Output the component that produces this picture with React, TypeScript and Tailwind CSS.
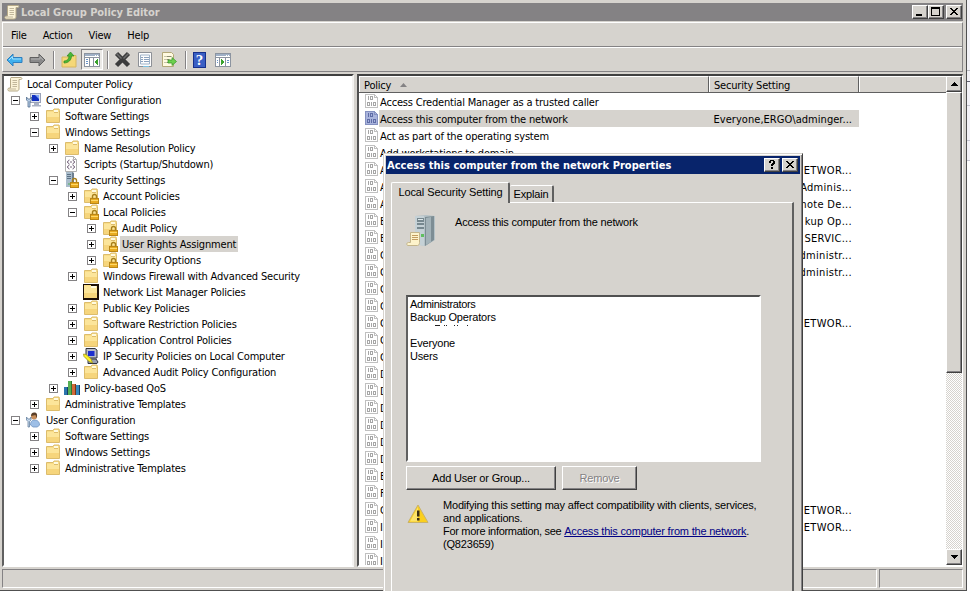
import type { ReactNode } from "react";

// ============================================================
//  Local Group Policy Editor: console window + properties dialog
// ============================================================

type IconName =
  | "scroll"
  | "computer"
  | "folder"
  | "script"
  | "server"
  | "locked"
  | "framed"
  | "ipsec"
  | "bars"
  | "user";

interface TreeItem {
  level: number;
  label: string;
  icon: IconName;
  box?: "+" | "-";
  selected?: boolean;
}

const TREE: TreeItem[] = [
  { level: 0, label: "Local Computer Policy", icon: "scroll" },
  { level: 1, label: "Computer Configuration", icon: "computer", box: "-" },
  { level: 2, label: "Software Settings", icon: "folder", box: "+" },
  { level: 2, label: "Windows Settings", icon: "folder", box: "-" },
  { level: 3, label: "Name Resolution Policy", icon: "folder", box: "+" },
  { level: 3, label: "Scripts (Startup/Shutdown)", icon: "script" },
  { level: 3, label: "Security Settings", icon: "server", box: "-" },
  { level: 4, label: "Account Policies", icon: "locked", box: "+" },
  { level: 4, label: "Local Policies", icon: "locked", box: "-" },
  { level: 5, label: "Audit Policy", icon: "locked", box: "+" },
  { level: 5, label: "User Rights Assignment", icon: "locked", box: "+", selected: true },
  { level: 5, label: "Security Options", icon: "locked", box: "+" },
  { level: 4, label: "Windows Firewall with Advanced Security", icon: "folder", box: "+" },
  { level: 4, label: "Network List Manager Policies", icon: "framed" },
  { level: 4, label: "Public Key Policies", icon: "folder", box: "+" },
  { level: 4, label: "Software Restriction Policies", icon: "folder", box: "+" },
  { level: 4, label: "Application Control Policies", icon: "folder", box: "+" },
  { level: 4, label: "IP Security Policies on Local Computer", icon: "ipsec", box: "+" },
  { level: 4, label: "Advanced Audit Policy Configuration", icon: "folder", box: "+" },
  { level: 3, label: "Policy-based QoS", icon: "bars", box: "+" },
  { level: 2, label: "Administrative Templates", icon: "folder", box: "+" },
  { level: 1, label: "User Configuration", icon: "user", box: "-" },
  { level: 2, label: "Software Settings", icon: "folder", box: "+" },
  { level: 2, label: "Windows Settings", icon: "folder", box: "+" },
  { level: 2, label: "Administrative Templates", icon: "folder", box: "+" },
];

const INDENT = ["pl-[3px]", "pl-[7px]", "pl-[26px]", "pl-[45px]", "pl-[64px]", "pl-[83px]"];

const POLICIES: [string, string][] = [
  ["Access Credential Manager as a trusted caller", ""],
  ["Access this computer from the network", "Everyone,ERGO\\adminger..."],
  ["Act as part of the operating system", ""],
  ["Add workstations to domain", ""],
  ["A", "ETWOR..."],
  ["A", "Adminis..."],
  ["A", "mote De..."],
  ["B", "kup Op..."],
  ["B", "SERVIC..."],
  ["C", "dministr..."],
  ["C", "dministr..."],
  ["C", ""],
  ["C", ""],
  ["C", "ETWOR..."],
  ["C", ""],
  ["C", ""],
  ["D", ""],
  ["D", ""],
  ["D", ""],
  ["D", ""],
  ["D", ""],
  ["D", ""],
  ["E", ""],
  ["F", ""],
  ["G", "ETWOR..."],
  ["I", "ETWOR..."],
  ["I", ""],
  ["I", ""],
];

const RAISED =
  "border border-t-white border-l-white border-r-[#404040] border-b-[#404040] shadow-[inset_-1px_-1px_0_#848284] bg-[#d6d3ce]";

function FolderShape() {
  return (
    <>
      <path d="M1.500 2.500h6.500l1-1.500h5l.5 1.500v12h-13z" fill="#f9dd86" stroke="#dcbc6c" />
      <path d="M2 4h12v10H2z" fill="#fce59a" />
      <path d="M2 9h12v5H2z" fill="#f6d57c" />
      <path d="M9 2h4v2H9z" fill="#fffae0" />
      <path d="M9 4.500h4" stroke="#dcbc6c" />
    </>
  );
}

function LockShape() {
  return (
    <>
      <path d="M9.500 11V8.500a2 2 0 0 1 4 0V11" fill="none" stroke="#a8801c" strokeWidth="1.400" />
      <rect x="7.500" y="10.500" width="8" height="5" fill="#e8ab20" stroke="#b98618" />
      <path d="M8 12.500h7" stroke="#ffd968" />
    </>
  );
}

function ScrollShape() {
  return (
    <>
      <path d="M4 1.500h10c1 0 1.500 2-.5 2H12v9.500c0 1-1 2-2 2H2c-1.500 0-1.500-3 0-3h1.500V2.500z" fill="#fbf3d8" stroke="#b5a988" />
      <path d="M5.500 4.500h4.500M5.500 6.500h4.500M5.500 8.500h4.500M5.500 10.500h4.500M2 13h7" stroke="#c1b79c" />
    </>
  );
}

function TreeIcon({ name }: { name: IconName }) {
  return (
    <svg className="block size-4 shrink-0" viewBox="0 0 16 16">
      {name === "scroll" && <ScrollShape />}
      {name === "folder" && <FolderShape />}
      {name === "locked" && (
        <>
          <FolderShape />
          <LockShape />
        </>
      )}
      {name === "framed" && (
        <>
          <path d="M0 0h16v16H0z" fill="#1c0f08" />
          <path d="M1 2h13v12H1z" fill="#fce59a" />
          <path d="M1 9h13v5H1z" fill="#f6d57c" />
          <path d="M1 1h7v1H1z" fill="#f9dd86" />
          <path d="M8 2h5v2H8z" fill="#fffae0" />
        </>
      )}
      {name === "computer" && (
        <>
          <rect x="4.500" y="1.500" width="10" height="9" fill="#dce2ee" stroke="#9aa2b8" />
          <path d="M6 3h7v6H6z" fill="#1230c0" />
          <path d="M9 3h4v4z" fill="#7fa4f4" />
          <path d="M8 11h5v2h2v1.500H6V13h2z" fill="#aab2c4" />
          <path d="M.5 5v3L2 9.500V15h2V9.500L5.500 8V5L4 7H2z" fill="#b9cfe8" stroke="#54708f" strokeWidth=".8" />
        </>
      )}
      {name === "script" && (
        <>
          <path d="M1.500.5h8l3 3v12h-11z" fill="#fff" stroke="#b0b0b0" />
          <path d="M9.500.5v3h3" fill="none" stroke="#b0b0b0" />
          <path d="M5.500 4C3.500 4 5 6 3 6c2 0 .5 2 2.500 2M8.500 4c2 0 .5 2 2.500 2-2 0-.5 2-2.500 2M5.500 9C3.500 9 5 11 3 11c2 0 .5 2 2.500 2M8.500 9c2 0 .5 2 2.500 2-2 0-.5 2-2.500 2M6 6h2M6 11h2" fill="none" stroke="#75647c" />
        </>
      )}
      {name === "server" && (
        <>
          <path d="M2 0h6l2 1v13l-2 1H2z" fill="#a9bccb" />
          <path d="M8 0l2 1v13l-2 1z" fill="#6d7f90" />
          <path d="M3 2.500h4M3 4.500h4M3 6.500h4" stroke="#5c7184" />
          <path d="M4 12h3" stroke="#4fae5a" />
          <g transform="translate(-1 0)">
            <LockShape />
          </g>
        </>
      )}
      {name === "ipsec" && (
        <>
          <path d="M3 .5h9l2 1.500v8H3z" fill="#b9bdc9" stroke="#31343f" />
          <path d="M5 3h6.500v5H5z" fill="#1c2fd0" />
          <path d="M5 11h8l2 3-1 1.500H5z" fill="#9aa0b0" stroke="#31343f" />
          <path d="M.5 6L3 6.500l5 4.500 1.500 4-3.500-1.500-5-5z" fill="#fbf22a" stroke="#a5971b" strokeWidth=".8" />
        </>
      )}
      {name === "bars" && (
        <>
          <path d="M0 7h4v8H0z" fill="#2b74ad" />
          <path d="M4 1h4v14H4z" fill="#55b054" />
          <path d="M7 1h1v14H7z" fill="#2c7a30" />
          <path d="M8 4h4v11H8z" fill="#cf6a3a" />
          <path d="M11 4h1v11h-1z" fill="#7d3414" />
          <path d="M12 5h4v10h-4z" fill="#3588bd" />
          <path d="M15 5h1v10h-1zM3 7h1v8H3z" fill="#153f66" />
        </>
      )}
      {name === "user" && (
        <>
          <path d="M4.500 13c0-4 2-5 4-5s5 1 5 5l-2 2H7z" fill="#9ebfe6" stroke="#6e93bf" strokeWidth=".8" />
          <circle cx="8" cy="4.500" r="3" fill="#c98f5c" />
          <path d="M5 4c0-3 2-4 4-3.500C11.500 1 11.500 4 10.500 6L9.500 3z" fill="#5a3f28" />
          <path d="M.5 5v3L2 9.500V15h1.500V9.500L5 8V5L4 7H2z" fill="#c7dbef" stroke="#67819f" strokeWidth=".8" />
        </>
      )}
    </svg>
  );
}

function Expander({ sign }: { sign?: "+" | "-" }) {
  if (!sign) return <span className="w-[9px] shrink-0" />;
  return (
    <svg className="block size-[9px] shrink-0" viewBox="0 0 9 9" shapeRendering="crispEdges">
      <rect x=".5" y=".5" width="8" height="8" fill="#fff" stroke="#848284" />
      <path d={sign === "+" ? "M2 4.500h5M4.500 2v5" : "M2 4.500h5"} stroke="#000" />
    </svg>
  );
}

function PolicyIcon({ active }: { active: boolean }) {
  return (
    <svg className="block h-[15px] w-[14px] shrink-0" viewBox="0 0 14 15" shapeRendering="crispEdges">
      <path d="M.5.5h9l3 3v10h-12z" fill={active ? "#a9b4dc" : "#fff"} stroke={active ? "#8490c0" : "#c0c0c0"} />
      <path d="M9.500.5v3h3" fill="none" stroke={active ? "#8490c0" : "#c0c0c0"} />
      <g fill="none" stroke={active ? "#5f6ca6" : "#a6a6a6"}>
        <path d="M3.500 2v4M5.500 2.500h2v3h-2zM2.500 8.500h2v3h-2zM6.500 8v4M8.500 8.500h2v3h-2z" />
      </g>
    </svg>
  );
}

function Toolbar() {
  return (
    <div className="flex h-6 items-center border-t border-white pl-[3px]">
      <svg className="block h-4 w-[17px]" viewBox="0 0 17 16">
        <path d="M1 8l6-6v3.500h9v5H7V14z" fill="#3fb0ee" stroke="#2f7fbe" />
        <path d="M3 8l3.500-3.500V7H15" fill="none" stroke="#a4e0fb" />
      </svg>
      <svg className="ml-[6px] block h-4 w-[17px]" viewBox="0 0 17 16">
        <path d="M16 8l-6-6v3.500H1v5h9V14z" fill="#8a8a8a" stroke="#606060" />
        <path d="M2 7h9V4.500L14 8" fill="none" stroke="#b0b0b0" />
      </svg>
      <Divider className="ml-[7px]" />
      <svg className="ml-[6px] block size-4" viewBox="0 0 16 16">
        <path d="M1 5h6l1-1.500h7V15H1z" fill="#f5d878" stroke="#d6b660" />
        <path d="M3 9c3 0 5-2 5-5H6l3.500-4L13 4h-2.500c0 4-3 7-7.500 7z" fill="#49b834" stroke="#2f8a24" strokeWidth=".7" />
      </svg>
      <div className="ml-[4px] flex h-[21px] w-[22px] items-center justify-center border border-t-[#848284] border-l-[#848284] border-r-white border-b-white bg-[#ebe9e6]">
        <ConsoleIcon flip={false} />
      </div>
      <Divider className="ml-[4px]" />
      <svg className="ml-[5px] block size-[17px]" viewBox="0 0 17 17">
        <path d="M2.500 2.500l12 12M14.500 2.500l-12 12" stroke="#3c3c3c" strokeWidth="4.400" />
        <path d="M2.500 2.500l5 5M14.500 2.500l-5 5" stroke="#6d6d6d" strokeWidth="1.500" />
      </svg>
      <svg className="ml-[6px] block size-4" viewBox="0 0 16 16">
        <path d="M1.500.5h13v14h-13z" fill="#fdfdfd" stroke="#8d9096" />
        <path d="M4 5.500h2M4 7.500h2M4 9.500h2M7 5.500h5M7 7.500h5M7 9.500h5" stroke="#8ca2be" />
        <path d="M3.500 3h9v9h-9z" fill="none" stroke="#9eb2c8" />
        <path d="M6 14.500h6" stroke="#7cc2e2" />
      </svg>
      <svg className="ml-[8px] block size-4" viewBox="0 0 16 16">
        <path d="M1.500.5h9l2 2v12h-11z" fill="#fffae0" stroke="#b3a878" />
        <path d="M3.500 4.500h1M3.500 7.500h1M3.500 10.500h1M5.500 4.500h5M5.500 7.500h3M5.500 10.500h2" stroke="#8c8c70" />
        <path d="M7 8h4V5.500L15.500 9.500 11 13.500V11H7z" fill="#6cd04e" stroke="#349426" strokeWidth=".7" />
      </svg>
      <Divider className="ml-[8px]" />
      <div className="ml-[6px] flex h-4 w-[13px] items-center justify-center border border-[#16308c] bg-[#3a5fc4] font-['Liberation_Serif',serif] text-[15px] font-bold text-white">
        ?
      </div>
      <div className="ml-[9px]">
        <ConsoleIcon flip />
      </div>
    </div>
  );
}

function ConsoleIcon({ flip }: { flip: boolean }) {
  return (
    <svg className="block h-[14px] w-4" viewBox="0 0 16 14" shapeRendering="crispEdges">
      <path d="M.5.5h15v13H.5z" fill="#fff" stroke="#8c94a0" />
      <path d="M1 1h14v2H1z" fill="#9fb0c6" />
      <path d="M11 2h1M13 2h1" stroke="#fff" />
      <path d="M1 4.500h14" stroke="#8c94a0" />
      <path d={flip ? "M10.500 5v8M4.500 5v8" : "M5.500 5v8M9.500 5v8"} stroke="#8c94a0" />
      <path d={flip ? "M12 7.500h2M12 9.500h2M2 7.500h1M2 9.500h1" : "M2 6.500h2M2 8.500h2M2 10.500h2"} stroke="#6a93c8" />
      <path d={flip ? "M6 6l4 3-4 3z" : "M14 6l-4 3 4 3z"} fill="#39a22c" />
    </svg>
  );
}

function Divider({ className }: { className: string }) {
  return <span className={`h-[18px] w-[2px] border-l border-[#848284] bg-white ${className}`} />;
}

function CaptionButton({ children, className = "" }: { children: ReactNode; className?: string }) {
  return (
    <button className={`flex h-[14px] w-4 items-center justify-center text-black ${RAISED} ${className}`}>
      <svg className="block h-[10px] w-3" viewBox="0 0 12 10" shapeRendering="crispEdges">
        {children}
      </svg>
    </button>
  );
}

function CloseGlyph() {
  return (
    <path
      d="M2 1h2v1h1v1h2V2h1V1h2v1H9v1H8v1H7v1h1v1h1v1h1v1H8V7H7V6H5v1H4v1H2V7h1V6h1V5h1V4H4V3H3V2H2z"
      fill="#000"
    />
  );
}

function PolicyTree() {
  return (
    <div className="w-[352px] shrink-0 overflow-hidden border-2 border-t-[#404040] border-l-[#606060] border-r-[#f4f3f1] border-b-white bg-white">
      {TREE.map((item, i) => (
        <div key={i} className={`flex h-4 items-center whitespace-nowrap ${INDENT[item.level]}`}>
          {item.level > 0 && <Expander sign={item.box} />}
          <span className={item.level > 0 ? "ml-[6px]" : ""}>
            <TreeIcon name={item.icon} />
          </span>
          <span
            className={`ml-[2px] h-4 px-[2px] leading-[17px] ${item.selected ? "bg-[#d6d3ce]" : ""}`}
          >
            {item.label}
          </span>
        </div>
      ))}
    </div>
  );
}

function PolicyList() {
  return (
    <div className="flex min-w-0 flex-1 border-2 border-t-[#404040] border-l-[#505050] border-r border-r-white border-b-white bg-white">
      <div className="flex min-w-0 flex-1 flex-col overflow-hidden">
        <div className="flex h-[17px] shrink-0 border-b border-[#606060] bg-[#d6d3ce]">
          <div className="flex w-[350px] items-center border-t border-l border-white border-r border-r-[#606060] pl-1 pt-[2px]">
            Policy
            <svg className="-mt-px ml-[9px] block h-1 w-[7px]" viewBox="0 0 7 4">
              <path d="M3.500 0L7 4H0z" fill="#848284" />
            </svg>
          </div>
          <div className="flex w-[150px] items-center border-t border-l border-white border-r border-r-[#606060] pl-1 pt-[2px]">
            Security Setting
          </div>
          <div className="flex-1 border-t border-l border-white" />
        </div>
        <div className="min-h-0 flex-1 overflow-hidden">
          {POLICIES.map(([name, setting], i) => (
            <div key={i} className="flex h-[17px] items-center whitespace-nowrap pl-[6px]">
              <PolicyIcon active={i === 1} />
              <div
                className={`flex h-[17px] w-[480px] items-center justify-between pl-[1px] pr-[7px] leading-[15px] ${
                  i === 1 ? "bg-[#d6d3ce]" : ""
                }`}
              >
                <span className="pt-px">{name}</span>
                <span className={`pt-px ${i === 1 ? "tracking-[0.04px]" : "tracking-[0.3px]"}`}>
                  {setting}
                </span>
              </div>
            </div>
          ))}
        </div>
      </div>
      <div className="flex w-4 shrink-0 flex-col bg-[repeating-conic-gradient(#fff_0_25%,#d6d3ce_0_50%)] bg-[length:2px_2px]">
        <div className={`flex h-4 items-center justify-center ${RAISED}`}>
          <svg className="block h-1 w-[7px]" viewBox="0 0 7 4" shapeRendering="crispEdges">
            <path d="M3 0h1v1h1v1h1v1h1v1H0V3h1V2h1V1h1z" />
          </svg>
        </div>
        <div className={`h-[281px] ${RAISED}`} />
        <div className={`mt-auto flex h-4 items-center justify-center ${RAISED}`}>
          <svg className="block h-1 w-[7px]" viewBox="0 0 7 4" shapeRendering="crispEdges">
            <path d="M0 0h7v1H6v1H5v1H4v1H3V3H2V2H1V1H0z" />
          </svg>
        </div>
      </div>
    </div>
  );
}

function PropertiesDialog() {
  return (
    <div className="absolute left-[383px] top-[153px] flex h-[438px] w-[420px] flex-col border-x border-t border-l-[#d6d3ce] border-t-[#d6d3ce] border-r-[#404040] bg-[#d6d3ce] shadow-[inset_1px_1px_0_#fff,inset_-1px_0_0_#848284]">
      <div className="mx-[2px] mt-[2px] flex h-[18px] shrink-0 items-center bg-[#08246b] pl-[1px] pr-[2px] text-white">
        <span className="flex-1 whitespace-nowrap pt-px font-bold tracking-[0.05px]">
          Access this computer from the network Properties
        </span>
        <CaptionButton>
          <path d="M3 1h1V0h4v1h1v3H8v1H7v1H5V4h1V3h1V1H5v2H3zM5 7h2v2H5z" fill="#000" />
        </CaptionButton>
        <CaptionButton className="ml-[2px]">
          <CloseGlyph />
        </CaptionButton>
      </div>

      <div className="ml-[7px] mr-[8px] mt-2 flex min-h-0 flex-1 flex-col font-['Liberation_Sans',Arial,sans-serif] tracking-[-0.18px]">
        <div className="flex h-5 shrink-0 items-end">
          <div className="relative -mb-px flex h-[21px] w-[119px] items-center justify-center rounded-t-[2px] border-l border-t border-white border-r-2 border-r-[#606060] bg-[#d6d3ce] pb-[2px] pl-[1px] tracking-[-0.1px]">
            Local Security Setting
          </div>
          <div className="flex h-[17px] w-[44px] items-center justify-center rounded-t-[2px] border-t border-white border-r-2 border-r-[#606060]">
            Explain
          </div>
        </div>
        <div className="flex min-h-0 flex-1 flex-col border-l border-t border-white border-r-2 border-r-[#606060] pl-[14px] pt-3">
          <div className="flex">
            <ServerIcon />
            <span className="ml-[17px] leading-[14px]">Access this computer from the network</span>
          </div>
          <div className="mt-[48px] h-[167px] w-[355px] shrink-0 border-2 border-t-[#505050] border-l-[#606060] border-r-white border-b-white bg-white pl-[2px] pt-[1px] leading-[13px]">
            <div className="tracking-[-0.35px]">Administrators</div>
            <div>Backup Operators</div>
            <div className="h-[13px]">
              <svg className="block h-[3px] w-[60px]" viewBox="0 0 60 3" shapeRendering="crispEdges">
                <path d="M25 1.500h5M34 1.500h1M36 1.500h1M44 1.500h1M47 1.500h1M57 1.500h1" stroke="#222" />
              </svg>
            </div>
            <div>Everyone</div>
            <div>Users</div>
          </div>
          <div className="mt-[4px] flex shrink-0 gap-[6px]">
            <button className={`h-[24px] w-[150px] pb-px ${RAISED}`}>Add User or Group...</button>
            <button
              className={`h-[24px] w-[75px] pb-px text-[#848284] [text-shadow:1px_1px_0_#fff] ${RAISED}`}
            >
              Remove
            </button>
          </div>
          <div className="mt-[9px] flex">
            <svg className="ml-[1px] mt-[5px] block h-5 w-[22px] shrink-0" viewBox="0 0 22 20">
              <path d="M11 1L21 18.500H1z" fill="#fbcf1c" stroke="#c9b26a" strokeLinejoin="round" />
              <path d="M11 3L3 17.500h8z" fill="#fde36a" />
              <path d="M10 6.500h2.500v6H10zM10 14h2.500v2.500H10z" fill="#3a2e12" />
            </svg>
            <p className="ml-[14px] whitespace-nowrap leading-[13px]">
              Modifying this setting may affect compatibility with clients, services,
              <br />
              and applications.
              <br />
              <span className="tracking-[-0.3px]">For more information, see </span>
              <a className="tracking-[-0.2px] text-[#000084] underline">
                Access this computer from the network
              </a>
              .
              <br />
              (Q823659)
            </p>
          </div>
        </div>
      </div>
    </div>
  );
}

function ServerIcon() {
  return (
    <svg className="block size-8" viewBox="0 0 32 32">
      <path d="M9 1l11-1 9 1v24l-10 6-10-2z" fill="#b4c1c6" />
      <path d="M19 2l9-1v24l-9 6z" fill="#7d8d94" />
      <path d="M20 3l5-1v25l-5 3z" fill="#a3b2b8" />
      <path d="M9 1h9v30l-9-2z" fill="#c5d1d6" />
      <path d="M11 3h7v4h-7zM11 8h7v2h-7zM11 12h7v2h-7z" fill="#77888f" />
      <path d="M12 4.500h5" stroke="#dde6e9" />
      <path d="M15 19h3v3h-3z" fill="#5fbf60" />
      <path d="M4.500 17.500h9v10c0 2-1 3-2 3H1.500c-1-1-1-3 1-3h2z" fill="#fdf3cb" stroke="#c4b58a" />
      <path d="M6 20.500h6M6 22.500h6M6 24.500h6" stroke="#c29c60" />
    </svg>
  );
}

export default function App() {
  return (
    <div className="relative flex h-[591px] w-[970px] overflow-hidden bg-[#f3f2f7] font-['DejaVu_Sans_Condensed','DejaVu_Sans',sans-serif] text-[11px] leading-[14px] tracking-[-0.19px] text-black">
      <div className="flex w-[967px] shrink-0 flex-col border-b border-r border-[#505050] bg-[#d6d3ce] pl-[2px] pr-[3px] pt-[3px]">
        <div className="flex h-[18px] shrink-0 items-center bg-[#848284] pl-[2px]">
          <TreeIcon name="scroll" />
          <span className="ml-[1px] flex-1 pt-px font-bold tracking-[-0.06px] text-[#d6d3ce]">
            Local Group Policy Editor
          </span>
          <CaptionButton>
            <path d="M2 7h6v2H2z" />
          </CaptionButton>
          <CaptionButton>
            <path d="M1 0h9v9H1zM2 2v6h7V2z" fillRule="evenodd" />
          </CaptionButton>
          <CaptionButton className="ml-[2px] mr-[1px]">
            <CloseGlyph />
          </CaptionButton>
        </div>

        <div className="mt-[1px] shrink-0 border border-t-white border-l-white border-r-[#848284] border-b-[#848284]">
          <div className="flex h-6 items-center gap-4 border-b border-[#848284] pl-2 pt-[2px]">
            <span>File</span>
            <span>Action</span>
            <span>View</span>
            <span>Help</span>
          </div>
          <Toolbar />
        </div>

        <div className="mt-[2px] flex h-[493px] shrink-0 gap-[3px]">
          <PolicyTree />
          <PolicyList />
        </div>

        <div className="mt-[2px] flex h-[19px] shrink-0 gap-[2px]">
          <div className="flex-1 border border-t-[#848284] border-l-[#848284] border-r-white border-b-white" />
          <div className="w-[84px] border border-t-[#848284] border-l-[#848284] border-r-white border-b-white" />
        </div>
      </div>
      <div className="flex w-[3px] flex-col">
        <div className="h-[71px] border-b border-[#b8b8c0]" />
        <div className="h-[11px] border-b border-[#606070]" />
        <div className="h-[24px] border-b border-[#c4c4d0]" />
        <div className="h-[35px] border-b border-[#c4c4d0]" />
        <div className="h-[20px] border-b border-[#c4c4d0]" />
        <div className="flex-1 bg-white" />
      </div>
      <PropertiesDialog />
    </div>
  );
}
